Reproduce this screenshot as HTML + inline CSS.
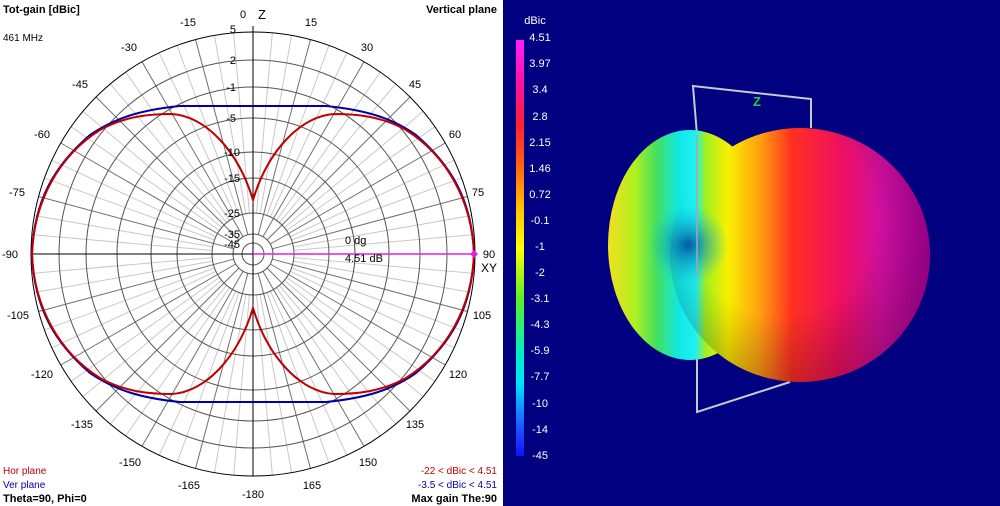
<!DOCTYPE html>
<html><head><meta charset="utf-8"><style>
html,body{margin:0;padding:0;width:1000px;height:506px;overflow:hidden;background:#fff}
svg{display:block;font-family:"Liberation Sans",Arial,sans-serif}
</style></head><body>
<svg id="s" width="1000" height="506" viewBox="0 0 1000 506" xmlns="http://www.w3.org/2000/svg">
<defs>
<linearGradient id="cb" x1="0" y1="0" x2="0" y2="1">
<stop offset="0" stop-color="#ff20ff"/><stop offset="0.12" stop-color="#ff1090"/>
<stop offset="0.2" stop-color="#ff2030"/><stop offset="0.3" stop-color="#ff6010"/>
<stop offset="0.4" stop-color="#ffc000"/><stop offset="0.5" stop-color="#ffff00"/>
<stop offset="0.62" stop-color="#60f020"/><stop offset="0.75" stop-color="#00f0c0"/>
<stop offset="0.83" stop-color="#00e0ff"/><stop offset="0.92" stop-color="#2060ff"/>
<stop offset="1" stop-color="#1010ff"/></linearGradient>
<linearGradient id="blob" gradientUnits="userSpaceOnUse" x1="609" y1="0" x2="930" y2="0">
<stop offset="0" stop-color="#f0e020"/><stop offset="0.08" stop-color="#b0f020"/>
<stop offset="0.15" stop-color="#40e060"/><stop offset="0.22" stop-color="#10e8e8"/>
<stop offset="0.27" stop-color="#20f0f0"/><stop offset="0.3" stop-color="#a0f020"/>
<stop offset="0.37" stop-color="#f8f000"/><stop offset="0.47" stop-color="#ffa010"/>
<stop offset="0.57" stop-color="#ff3020"/><stop offset="0.72" stop-color="#f01060"/>
<stop offset="0.85" stop-color="#d010a0"/><stop offset="1" stop-color="#b000a0"/></linearGradient>
<radialGradient id="hole" gradientUnits="userSpaceOnUse" cx="688" cy="245" r="40">
<stop offset="0" stop-color="#0050a0" stop-opacity="0.95"/><stop offset="1" stop-color="#10c0e0" stop-opacity="0"/></radialGradient>
<radialGradient id="shade" gradientUnits="userSpaceOnUse" cx="780" cy="220" r="190">
<stop offset="0.5" stop-color="#000" stop-opacity="0"/><stop offset="1" stop-color="#400020" stop-opacity="0.35"/></radialGradient>
</defs>
<rect x="503" y="0" width="497" height="506" fill="#000080"/>
<g id="grid"></g>
<g font-size="11" fill="#000">
<text x="3" y="13" font-weight="bold">Tot-gain [dBic]</text>
<text x="3" y="41" font-size="10">461 MHz</text>
<text x="497" y="13" font-weight="bold" text-anchor="end">Vertical plane</text>
<text x="243" y="18" text-anchor="middle">0</text><text x="262" y="19" text-anchor="middle" font-size="13">Z</text>
<g text-anchor="middle">
<text x="311" y="26">15</text><text x="367" y="51">30</text><text x="415" y="88">45</text><text x="455" y="138">60</text><text x="478" y="196">75</text>
<text x="489" y="258">90</text><text x="482" y="319">105</text><text x="458" y="378">120</text><text x="415" y="428">135</text><text x="368" y="466">150</text><text x="312" y="489">165</text><text x="253" y="498">-180</text>
<text x="188" y="26">-15</text><text x="129" y="51">-30</text><text x="80" y="88">-45</text><text x="42" y="138">-60</text><text x="17" y="196">-75</text>
<text x="10" y="258">-90</text><text x="18" y="319">-105</text><text x="42" y="378">-120</text><text x="82" y="428">-135</text><text x="130" y="466">-150</text><text x="189" y="489">-165</text>
</g>
<g text-anchor="end" font-size="11">
<text x="236" y="33">5</text><text x="236" y="64">2</text><text x="236" y="91">-1</text><text x="236" y="122">-5</text><text x="240" y="156">-10</text><text x="240" y="182">-15</text><text x="240" y="217">-25</text><text x="240" y="238">-35</text><text x="240" y="248">-45</text>
</g>
<text x="345" y="244">0 dg</text><text x="345" y="262">4.51 dB</text>
<text x="481" y="272" font-size="12">XY</text>
<text x="3" y="474" font-size="10" fill="#c00000">Hor plane</text>
<text x="3" y="488" font-size="10" fill="#0000b0">Ver plane</text>
<text x="3" y="502" font-weight="bold">Theta=90, Phi=0</text>
<text x="497" y="474" font-size="10" fill="#c00000" text-anchor="end">-22 &lt; dBic &lt; 4.51</text>
<text x="497" y="488" font-size="10" fill="#0000b0" text-anchor="end">-3.5 &lt; dBic &lt; 4.51</text>
<text x="497" y="502" font-weight="bold" text-anchor="end">Max gain The:90</text>
</g>
<rect x="516" y="40" width="8" height="416" fill="url(#cb)"/>
<g font-size="11" fill="#fff" text-anchor="middle">
<text x="535" y="24">dBic</text>
<text x="540" y="41">4.51</text><text x="540" y="67">3.97</text><text x="540" y="93">3.4</text><text x="540" y="120">2.8</text><text x="540" y="146">2.15</text><text x="540" y="172">1.46</text><text x="540" y="198">0.72</text><text x="540" y="224">-0.1</text><text x="540" y="250">-1</text><text x="540" y="276">-2</text><text x="540" y="302">-3.1</text><text x="540" y="328">-4.3</text><text x="540" y="354">-5.9</text><text x="540" y="380">-7.7</text><text x="540" y="407">-10</text><text x="540" y="433">-14</text><text x="540" y="459">-45</text>
</g>
<g stroke="#c8c8d0" stroke-width="2" fill="none">
<polyline points="697,135 693,86 811,99 811,128"/>
<polyline points="697,340 697,412 790,382"/>
</g>
<text x="757" y="106" fill="#20d040" font-size="13" font-weight="bold" text-anchor="middle">Z</text>
<ellipse cx="690" cy="245" rx="82" ry="115" fill="url(#blob)"/>
<ellipse cx="800" cy="255" rx="130" ry="127" fill="url(#blob)"/>
<ellipse cx="688" cy="245" rx="40" ry="60" fill="url(#hole)"/>
<ellipse cx="800" cy="255" rx="130" ry="127" fill="url(#shade)"/>
<line x1="697" y1="135" x2="697" y2="275" stroke="#a0a8b0" stroke-width="1.5"/>
</svg>
<script>
var g=document.getElementById('grid'),cx=253,cy=254,R=222,h='';
var rings=[222,194,167,136,102,76,41,20,11];
for(var a=0;a<360;a+=5){var t=a*Math.PI/180,maj=a%15==0,r0=maj?20:41;
h+='<line x1="'+(cx+r0*Math.sin(t))+'" y1="'+(cy-r0*Math.cos(t))+'" x2="'+(cx+R*Math.sin(t))+'" y2="'+(cy-R*Math.cos(t))+'" stroke="'+(maj?'#707070':'#c8c8c8')+'" stroke-width="1"/>';}
rings.forEach(function(r,i){h+='<circle cx="'+cx+'" cy="'+cy+'" r="'+r+'" fill="none" stroke="'+(i==0?'#000':'#555')+'" stroke-width="1"/>';});
h+='<line x1="'+(cx-R)+'" y1="'+cy+'" x2="'+(cx+R)+'" y2="'+cy+'" stroke="#000"/><line x1="'+cx+'" y1="'+(cy-R-6)+'" x2="'+cx+'" y2="'+(cy+R)+'" stroke="#000"/>';
var blue='M32,254 C34,200 55,165 90,135 C115,118 140,110 180,106 L326,106 C366,110 392,118 416,135 C451,165 472,200 474,254 C472,308 451,343 416,373 C392,390 366,398 326,402 L180,402 C140,398 115,390 90,373 C55,343 34,308 32,254Z';
var red='M32,254 C34,200 60,155 100,130 C125,116 150,114 172,114 C205,116 238,150 253,200 C268,150 301,116 334,114 C356,114 381,116 406,130 C446,155 472,200 474,254 C472,308 446,353 406,378 C381,392 356,394 334,394 C301,392 268,358 253,308 C238,358 205,392 172,394 C150,394 125,392 100,378 C60,353 34,308 32,254Z';
h+='<path d="'+blue+'" fill="none" stroke="#0000a0" stroke-width="2"/><path d="'+red+'" fill="none" stroke="#c00000" stroke-width="2"/>';
h+='<line x1="253" y1="254" x2="474" y2="254" stroke="#e020e0" stroke-width="1.5"/><path d="M474,250 L478,254 474,258 470,254Z" fill="#e020e0"/>';
g.innerHTML=h;
</script>
</body></html>
